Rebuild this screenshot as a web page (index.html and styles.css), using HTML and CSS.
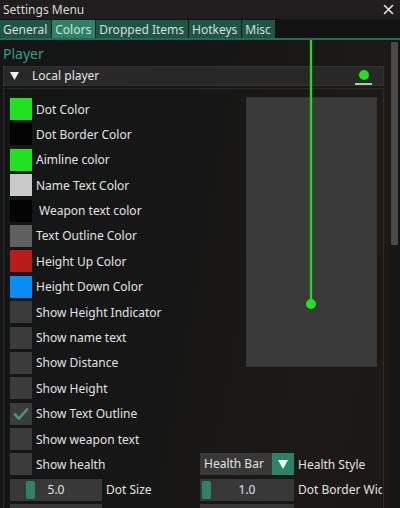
FILE: index.html
```html
<!DOCTYPE html>
<html lang="en">
<head>
    <meta charset="UTF-8">
    <meta name="viewport" content="width=device-width, initial-scale=1.0">
    <title>Settings Menu</title>
    <link rel="stylesheet" href="styles.css">
</head>
<body>

<div class="window">
    <!-- Title bar -->
    <div class="titlebar">
        <span class="title">Settings Menu</span>
        <svg class="close" width="11" height="11" viewBox="0 0 11 11"><path d="M1.5 1.5 L9.5 9.5 M9.5 1.5 L1.5 9.5" stroke="#e8e8e8" stroke-width="1.6" stroke-linecap="round"/></svg>
    </div>

    <!-- Tabs -->
    <div class="tabs">
        <div class="tab">General</div>
        <div class="tab active">Colors</div>
        <div class="tab">Dropped Items</div>
        <div class="tab">Hotkeys</div>
        <div class="tab">Misc</div>
    </div>

    <div class="main">
        <div class="content">
            <div class="section-title">Player</div>

            <div class="header">
                <svg class="arrow" width="9" height="8" viewBox="0 0 9 8"><path d="M0 0 H9 L4.5 8 Z" fill="#f2f2f2"/></svg>
                <span class="header-label">Local player</span>
                <div class="indicator">
                    <span class="indicator-dot"></span>
                    <span class="indicator-bar"></span>
                </div>
            </div>

            <div class="child">
                <div class="grid">
                    <div class="list">
                        <div class="row"><span class="swatch green"></span><span class="label">Dot Color</span></div>
                        <div class="row"><span class="swatch black"></span><span class="label">Dot Border Color</span></div>
                        <div class="row"><span class="swatch green"></span><span class="label">Aimline color</span></div>
                        <div class="row"><span class="swatch light"></span><span class="label">Name Text Color</span></div>
                        <div class="row"><span class="swatch black"></span><span class="label indent">Weapon text color</span></div>
                        <div class="row"><span class="swatch grey"></span><span class="label">Text Outline Color</span></div>
                        <div class="row"><span class="swatch red"></span><span class="label">Height Up Color</span></div>
                        <div class="row"><span class="swatch blue"></span><span class="label">Height Down Color</span></div>
                        <div class="row"><span class="checkbox"></span><span class="label">Show Height Indicator</span></div>
                        <div class="row"><span class="checkbox"></span><span class="label">Show name text</span></div>
                        <div class="row"><span class="checkbox"></span><span class="label">Show Distance</span></div>
                        <div class="row"><span class="checkbox"></span><span class="label">Show Height</span></div>
                        <div class="row">
                            <span class="checkbox">
                                <svg width="22" height="22" viewBox="0 0 22 22"><path d="M5 11.5 L9 15.5 L17 6.5" fill="none" stroke="#3a9c80" stroke-width="2.6" stroke-linecap="round" stroke-linejoin="round"/></svg>
                            </span>
                            <span class="label">Show Text Outline</span>
                        </div>
                        <div class="row"><span class="checkbox"></span><span class="label">Show weapon text</span></div>
                    </div>
                    <div class="preview"></div>

                    <div class="row"><span class="checkbox"></span><span class="label">Show health</span></div>
                    <div class="row">
                        <div class="combo">
                            <span class="combo-value">Health Bar</span>
                            <span class="combo-button">
                                <svg width="10" height="9" viewBox="0 0 10 9"><path d="M0 0 H10 L5 9 Z" fill="#f2f2f2"/></svg>
                            </span>
                        </div>
                        <span class="label">Health Style</span>
                    </div>

                    <div class="row">
                        <div class="slider small">
                            <span class="grab grab-mid"></span>
                            <span class="slider-value">5.0</span>
                        </div>
                        <span class="label">Dot Size</span>
                    </div>
                    <div class="row">
                        <div class="slider">
                            <span class="grab grab-start"></span>
                            <span class="slider-value">1.0</span>
                        </div>
                        <div class="clip"><span class="label">Dot Border Width</span></div>
                    </div>

                    <div class="row"><div class="slider small"></div></div>
                    <div class="row"><div class="slider"></div></div>
                </div>
            </div>
        </div>

        <div class="scrollbar"><div class="thumb"></div></div>
    </div>

    <!-- Aimline preview drawn over the menu -->
    <div class="aimline"></div>
    <div class="aimdot"></div>
</div>

</body>
</html>
```

FILE: styles.css
```css
/* Reset */
* {
    margin: 0;
    padding: 0;
    box-sizing: border-box;
}

body {
    font-family: "Noto Sans", "Open Sans", sans-serif;
    font-size: 12px;
    color: #e2e2e2;
    background-color: #151515;
}

/* Window */
.window {
    position: relative;
    width: 400px;
    height: 508px;
    overflow: hidden;
    background: linear-gradient(100deg, #141515 0%, #161616 45%, #1c1916 75%, #1b1815 100%);
}

/* Title bar */
.titlebar {
    height: 19px;
    display: flex;
    align-items: center;
    justify-content: space-between;
    padding: 0 6px 0 3px;
    background-color: #1f1d1d;
}

.title {
    font-size: 12px;
    color: #d8d8d8;
}

/* Tabs */
.tabs {
    height: 21px;
    display: flex;
    gap: 1px;
    padding-top: 1px;
    background-color: #121212;
    border-bottom: 2px solid #236b56;
}

.tab {
    height: 18px;
    padding: 0 4px 0 3px;
    display: flex;
    align-items: center;
    background-color: #1d5646;
    color: #dcdcdc;
    font-size: 12px;
}

.tab.active {
    background-color: #2b8468;
}

/* Main area */
.main {
    display: flex;
}

.content {
    flex: 1;
    padding: 4px 6px 0 3px;
}

.section-title {
    height: 20px;
    font-size: 14px;
    line-height: 20px;
    color: #3a9d80;
}

/* Collapsing header */
.header {
    margin-top: 2px;
    height: 20px;
    display: flex;
    align-items: flex-start;
    background-color: #282828;
    border: 1px solid #323232;
    padding-left: 6px;
}

.arrow {
    margin-top: 5px;
    margin-right: 13px;
}

.header-label {
    line-height: 18px;
}

.indicator {
    margin-left: auto;
    margin-right: 11px;
    width: 17px;
    display: flex;
    flex-direction: column;
    align-items: center;
    padding-top: 3px;
    gap: 3px;
}

.indicator-dot {
    width: 10px;
    height: 10px;
    border-radius: 50%;
    background-color: #1ee21e;
}

.indicator-bar {
    width: 17px;
    height: 2px;
    background-color: #bdbdbd;
}

/* Child region */
.child {
    margin-top: 2px;
    height: 430px;
    border-left: 1px solid #2c2c2c;
    border-right: 1px solid #2c2c2c;
    border-top: 1px solid #2a2a2a;
    padding: 9px 0 0 6px;
}

.grid {
    display: grid;
    grid-template-columns: 190px 1fr;
    row-gap: 3.4px;
}

.list {
    display: flex;
    flex-direction: column;
    gap: 3.4px;
}

.row {
    height: 22px;
    display: flex;
    align-items: center;
}

.label {
    margin-left: 4px;
    white-space: nowrap;
}

.label.indent {
    margin-left: 7px;
}

.clip {
    overflow: hidden;
    width: 88px;
}

/* Colour swatches and checkboxes */
.swatch,
.checkbox {
    width: 22px;
    height: 22px;
    flex-shrink: 0;
}

.checkbox {
    background-color: #3b3b3b;
}

.swatch.green { background-color: #1fe31f; }
.swatch.black { background-color: #050404; }
.swatch.light { background-color: #c9c9c9; }
.swatch.grey  { background-color: #5f5f5f; }
.swatch.red   { background-color: #bb1a1a; }
.swatch.blue  { background-color: #0a8cf6; }

/* Preview box */
.preview {
    margin-left: 46px;
    margin-top: -1px;
    width: 131px;
    height: 270px;
    background-color: #3a3a3a;
    border: 1px solid #333;
}

/* Combo */
.combo {
    width: 94px;
    height: 22px;
    display: flex;
    background-color: #383838;
}

.combo-value {
    flex: 1;
    padding-left: 4px;
    line-height: 22px;
}

.combo-button {
    width: 22px;
    background-color: #2b8468;
    display: flex;
    align-items: center;
    justify-content: center;
}

/* Sliders */
.slider {
    position: relative;
    width: 94px;
    height: 22px;
    background-color: #383838;
    display: flex;
    align-items: center;
    justify-content: center;
}

.slider.small {
    width: 92px;
}

.grab {
    position: absolute;
    top: 2px;
    width: 9px;
    height: 18px;
    border-radius: 2px;
    background-color: #2b8468;
}

.grab-mid {
    left: 16px;
}

.grab-start {
    left: 2px;
}

/* Scrollbar */
.scrollbar {
    width: 10px;
    padding: 2px 2px 0 1px;
    background-color: #171616;
}

.thumb {
    height: 203px;
    background-color: #4a4848;
    border-radius: 1px;
}

/* Aimline preview */
.aimline {
    position: absolute;
    left: 310px;
    top: 40px;
    width: 2px;
    height: 264px;
    background-color: #2ad42a;
    box-shadow: 0 0 2px #1a8a1a;
}

.aimdot {
    position: absolute;
    left: 306px;
    top: 299px;
    width: 10px;
    height: 10px;
    border-radius: 50%;
    background-color: #1ee21e;
}
```
